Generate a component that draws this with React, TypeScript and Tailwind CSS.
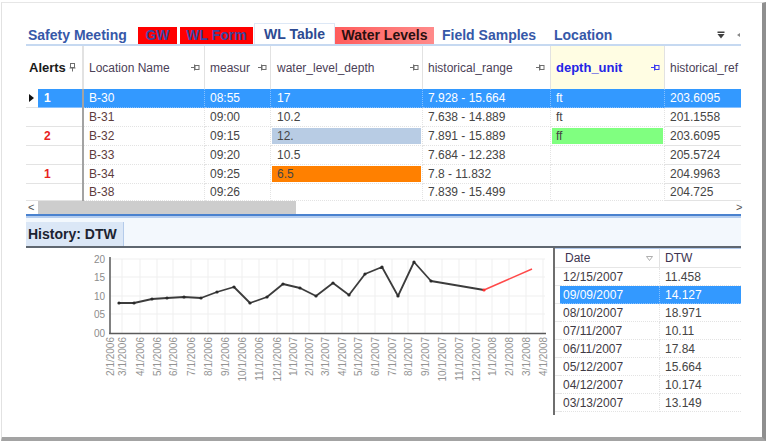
import React from "react";

type Row = {
  alert: string;
  loc: string;
  time: string;
  wld: string;
  range: string;
  unit: string;
  ref: string;
  sel?: boolean;
  wldCls?: string;
  unitCls?: string;
};

const rows: Row[] = [
  { alert: "1", loc: "B-30", time: "08:55", wld: "17", range: "7.928 - 15.664", unit: "ft", ref: "203.6095", sel: true },
  { alert: "", loc: "B-31", time: "09:00", wld: "10.2", range: "7.638 - 14.889", unit: "ft", ref: "201.1558" },
  { alert: "2", loc: "B-32", time: "09:15", wld: "12.", range: "7.891 - 15.889", unit: "ff", ref: "203.6095", wldCls: "bg-[#b8cce4]", unitCls: "bg-[#80ff80]" },
  { alert: "", loc: "B-33", time: "09:20", wld: "10.5", range: "7.684 - 12.238", unit: "", ref: "205.5724" },
  { alert: "1", loc: "B-34", time: "09:25", wld: "6.5", range: "7.8 - 11.832", unit: "", ref: "204.9963", wldCls: "bg-[#ff8000]" },
  { alert: "", loc: "B-38", time: "09:26", wld: "", range: "7.839 - 15.499", unit: "", ref: "204.725" },
];

const history: [string, string, boolean?][] = [
  ["12/15/2007", "11.458"],
  ["09/09/2007", "14.127", true],
  ["08/10/2007", "18.971"],
  ["07/11/2007", "10.11"],
  ["06/11/2007", "17.84"],
  ["05/12/2007", "15.664"],
  ["04/12/2007", "10.174"],
  ["03/13/2007", "13.149"],
];

const xLabels: [number, string][] = [
  [110, "2/1/2006"], [122, "3/1/2006"], [140, "4/1/2006"], [157, "5/1/2006"], [173, "6/1/2006"],
  [191, "7/1/2006"], [208, "8/1/2006"], [225, "9/1/2006"], [242, "10/1/2006"], [259, "11/1/2006"],
  [277, "12/1/2006"], [293, "1/1/2007"], [309, "2/1/2007"], [325, "3/1/2007"], [342, "4/1/2007"],
  [358, "5/1/2007"], [375, "6/1/2007"], [392, "7/1/2007"], [408, "8/1/2007"], [425, "9/1/2007"],
  [442, "10/1/2007"], [459, "11/1/2007"], [476, "12/1/2007"], [492, "1/1/2008"], [509, "2/1/2008"],
  [526, "3/1/2008"], [543, "4/1/2008"],
];

const pts: [number, number][] = [
  [119, 303], [134, 303], [152, 299], [167, 298], [184, 297], [201, 298], [217, 292], [234, 287],
  [250, 303], [267, 297], [283, 284], [300, 288], [316, 296], [333, 283], [349, 295], [365, 274],
  [382, 267], [398, 296], [414, 262], [431, 281], [484, 290],
];

function Pin({ color = "#6e6e6e" }: { color?: string }) {
  return (
    <svg width="9" height="7" viewBox="0 0 9 7" className="shrink-0">
      <line x1="0" y1="3.5" x2="3" y2="3.5" stroke={color} strokeWidth="1" />
      <line x1="3.5" y1="0.5" x2="3.5" y2="6.5" stroke={color} strokeWidth="1" />
      <rect x="4" y="1.5" width="4" height="4" fill="none" stroke={color} strokeWidth="1" />
    </svg>
  );
}

function PinDown() {
  return (
    <svg width="7" height="9" viewBox="0 0 7 9" className="shrink-0">
      <rect x="1.5" y="0.5" width="4" height="4" fill="none" stroke="#6e6e6e" strokeWidth="1" />
      <line x1="0.5" y1="5" x2="6.5" y2="5" stroke="#6e6e6e" strokeWidth="1" />
      <line x1="3.5" y1="5" x2="3.5" y2="8.5" stroke="#6e6e6e" strokeWidth="1" />
    </svg>
  );
}

function Tabs() {
  return (
    <div className="flex h-[22px] items-end border-b-2 border-[#c6d9f1] text-[14px] font-bold">
      <div className="flex h-[18px] w-[112px] items-center pl-[2px] text-[#3658a8]">Safety Meeting</div>
      <div className="flex h-[17px] w-[39px] items-center justify-center bg-[#ff0000] text-[#3a45a0]">GW</div>
      <div className="ml-[3px] flex h-[17px] w-[73px] items-center justify-center bg-[#ff0000] text-[#3a45a0]">WL Form</div>
      <div className="ml-[1px] flex h-[21px] w-[81px] items-center justify-center border border-b-0 border-[#dde8f6] bg-white text-[#2c4a92]">WL Table</div>
      <div className="flex h-[17px] w-[99px] items-center justify-center bg-gradient-to-r from-[#ff5c5c] to-[#ff8a8a] text-[#2a1010]">Water Levels</div>
      <div className="flex h-[18px] w-[120px] items-center pl-[8px] text-[#3658a8]">Field Samples</div>
      <div className="flex h-[18px] items-center text-[#3658a8]">Location</div>
      <div className="flex-1" />
      <div className="flex h-[18px] items-center gap-[12px] pr-[1px]">
        <svg width="8" height="8" viewBox="0 0 8 8">
          <rect x="0.5" y="0.5" width="7" height="1.5" fill="#404040" />
          <polygon points="0.5,3 7.5,3 4,7.5" fill="#404040" />
        </svg>
        <svg width="3" height="4" viewBox="0 0 3 4">
          <polygon points="3,0 3,4 0,2" fill="#888" />
        </svg>
      </div>
    </div>
  );
}

function Header() {
  return (
    <div className="flex h-[43px] bg-white text-[12px] text-[#4b4157]">
      <div className="flex w-[56px] items-center justify-between pl-[3px] pr-[6px]">
        <span className="text-[13px] font-bold text-[#1a1a1a]">Alerts</span>
        <PinDown />
      </div>
      <div className="w-[2px] bg-[#e2e2e2]" />
      <div className="flex w-[121px] items-center justify-between border-r border-[#e2e2e2] pl-[5px] pr-[4px]">
        <span>Location Name</span>
        <Pin />
      </div>
      <div className="flex w-[66px] items-center justify-between border-r border-[#e2e2e2] pl-[5px] pr-[3px]">
        <span>measur</span>
        <Pin />
      </div>
      <div className="flex w-[152px] items-center justify-between border-r border-[#e2e2e2] pl-[6px] pr-[3px]">
        <span>water_level_depth</span>
        <Pin />
      </div>
      <div className="flex w-[128px] items-center justify-between border-r border-[#e2e2e2] pl-[5px] pr-[5px]">
        <span>historical_range</span>
        <Pin />
      </div>
      <div className="flex w-[114px] items-center justify-between border-r border-[#e2e2e2] bg-[#fffde3] pl-[5px] pr-[4px]">
        <span className="text-[13px] font-bold text-[#2424e6]">depth_unit</span>
        <Pin color="#3a3af0" />
      </div>
      <div className="flex min-w-0 flex-1 items-center overflow-hidden whitespace-nowrap pl-[5px]">
        <span>historical_ref</span>
      </div>
    </div>
  );
}

function DataRow({ r, h }: { r: Row; h: string }) {
  const sel = r.sel;
  const line = sel ? "border-[#86c0ff]" : "border-[#e3e3e3]";
  const txt = sel ? "text-white" : "text-[#454545]";
  const cell = `flex items-center border-r border-dotted pl-[5px] ${line}`;
  return (
    <div className={`flex ${h} text-[12px] ${sel ? "bg-[#3399ff]" : "bg-white"}`}>
      <div className="flex w-[12px] items-center border-b border-[#e3e3e3] bg-white pl-[3px]">
        {sel && (
          <svg width="5" height="8" viewBox="0 0 5 8">
            <polygon points="0,0 5,4 0,8" fill="#111" />
          </svg>
        )}
      </div>
      <div className={`flex w-[44px] items-center border-b pl-[6px] font-bold ${line} ${sel ? "text-white" : "text-[#e8221e]"}`}>
        {r.alert}
      </div>
      <div className="w-[2px] bg-[#a3a3a3]" />
      <div className={`w-[121px] border-b ${cell} ${sel ? "text-white" : "text-[#5e3c3c]"}`}>{r.loc}</div>
      <div className={`w-[66px] border-b ${cell} ${txt}`}>{r.time}</div>
      <div className={`w-[152px] border-b p-[1px] ${line} border-r border-dotted ${txt}`}>
        <div className={`flex h-full items-center pl-[5px] ${r.wldCls ?? ""}`}>{r.wld}</div>
      </div>
      <div className={`w-[128px] border-b ${cell} ${txt}`}>{r.range}</div>
      <div className={`w-[114px] border-b p-[1px] ${line} border-r border-dotted ${txt}`}>
        <div className={`flex h-full items-center pl-[4px] ${r.unitCls ?? ""}`}>{r.unit}</div>
      </div>
      <div className={`flex flex-1 items-center border-b pl-[5px] ${line} ${txt}`}>{r.ref}</div>
    </div>
  );
}

function Chart() {
  const line = pts.map((p) => p.join(",")).join(" ");
  return (
    <svg width="527" height="167" viewBox="26 248 527 167" className="block shrink-0 bg-white">
      {xLabels.map(([x]) => (
        <line key={x} x1={x} y1={259} x2={x} y2={333} stroke="#efefef" strokeWidth="1" />
      ))}
      {[259, 277, 296, 314].map((y) => (
        <line key={y} x1={110} y1={y} x2={545} y2={y} stroke="#efefef" strokeWidth="1" />
      ))}
      {[
        [259, "20"],
        [277, "15"],
        [296, "10"],
        [314, "05"],
        [333, "00"],
      ].map(([y, t]) => (
        <text key={t} x={105} y={Number(y) + 3.5} fontSize="10" fill="#8c8c8c" textAnchor="end">
          {t}
        </text>
      ))}
      <line x1={110} y1={257} x2={110} y2={334} stroke="#5a5a5a" strokeWidth="1.5" />
      <line x1={109} y1={333.5} x2={546} y2={333.5} stroke="#5a5a5a" strokeWidth="1.5" />
      {xLabels.map(([x, t]) => (
        <text
          key={t}
          transform={`translate(${x + 3.5},337) rotate(-90)`}
          fontSize="10"
          fill="#939393"
          textAnchor="end"
        >
          {t}
        </text>
      ))}
      <polyline points={line} fill="none" stroke="#3c3c3c" strokeWidth="1.8" strokeLinejoin="round" />
      <polyline points="484,290 532,269" fill="none" stroke="#ff4a4a" strokeWidth="1.5" />
      {pts.map(([x, y], i) => (
        <circle key={i} cx={x} cy={y} r="1.6" fill={i === pts.length - 1 ? "#ff3030" : "#2a2a2a"} />
      ))}
    </svg>
  );
}

function DtwGrid() {
  return (
    <div className="flex w-[186px] flex-col border-t border-[#b2caec] text-[12px]">
      <div className="flex h-[19px] border-b border-[#e6e6e6] text-[#3d3450]">
        <div className="w-[5px]" />
        <div className="flex w-[100px] items-center justify-between border-r border-[#e2e2e2] pl-[5px] pr-[6px]">
          <span>Date</span>
          <svg width="7" height="5" viewBox="0 0 7 5">
            <polygon points="0.5,0.5 6.5,0.5 3.5,4.5" fill="none" stroke="#9a9a9a" strokeWidth="0.8" />
          </svg>
        </div>
        <div className="flex flex-1 items-center pl-[5px]">DTW</div>
      </div>
      {history.map(([d, v, sel]) => (
        <div key={d} className="flex h-[18px]">
          <div className="w-[5px] border-b border-[#e8e8e8]" />
          <div
            className={`flex w-[100px] items-center border-b border-r border-dotted pl-[3px] ${
              sel ? "border-[#86c0ff] bg-[#3399ff] text-white" : "border-[#e3e3e3] text-[#3f3a44]"
            }`}
          >
            {d}
          </div>
          <div
            className={`flex flex-1 items-center border-b border-dotted pl-[5px] ${
              sel ? "border-[#86c0ff] bg-[#3399ff] text-white" : "border-[#e3e3e3] text-[#454545]"
            }`}
          >
            {v}
          </div>
        </div>
      ))}
    </div>
  );
}

export default function App() {
  return (
    <div className="h-[441px] w-[768px] overflow-hidden bg-white font-['Liberation_Sans',Arial,sans-serif]">
      <div className="ml-[1px] mt-[2px] h-[439px] w-[765px] border-b-4 border-l border-r-4 border-t border-b-[#a3a3a3] border-l-[#e2e2e2] border-r-[#8f8f8f] border-t-[#e6e6e6] bg-white">
        <div className="ml-[24px] mt-[21px] w-[715px]">
          <Tabs />
          <Header />
          {rows.map((r, i) => (
            <DataRow key={r.loc} r={r} h={i === rows.length - 1 ? "h-[17px]" : "h-[19px]"} />
          ))}
          <div className="flex h-[13px] items-center text-[11px] text-[#505050]">
            <div className="w-[12px] pl-[2px] leading-none">&lt;</div>
            <div className="h-full w-[258px] bg-[#cdcdcd]" />
            <div className="flex-1" />
            <div className="w-[5px] leading-none">&gt;</div>
          </div>
          <div className="h-[2px] bg-[#4a82cf]" />
          <div className="h-[2px] bg-[#b4cdef]" />
          <div className="flex h-[28px] items-end bg-[#f3f8fd]">
            <div className="flex h-[24px] w-[98px] items-center border-r border-[#b4cbea] bg-[#dbe7f6] pl-[2px] text-[14px] font-bold text-[#1c2331]">
              History: DTW
            </div>
          </div>
          <div className="h-[2px] bg-[#5f6770]" />
          <div className="flex h-[167px]">
            <Chart />
            <div className="w-[2px] bg-[#6e6e6e]" />
            <DtwGrid />
          </div>
        </div>
      </div>
    </div>
  );
}
